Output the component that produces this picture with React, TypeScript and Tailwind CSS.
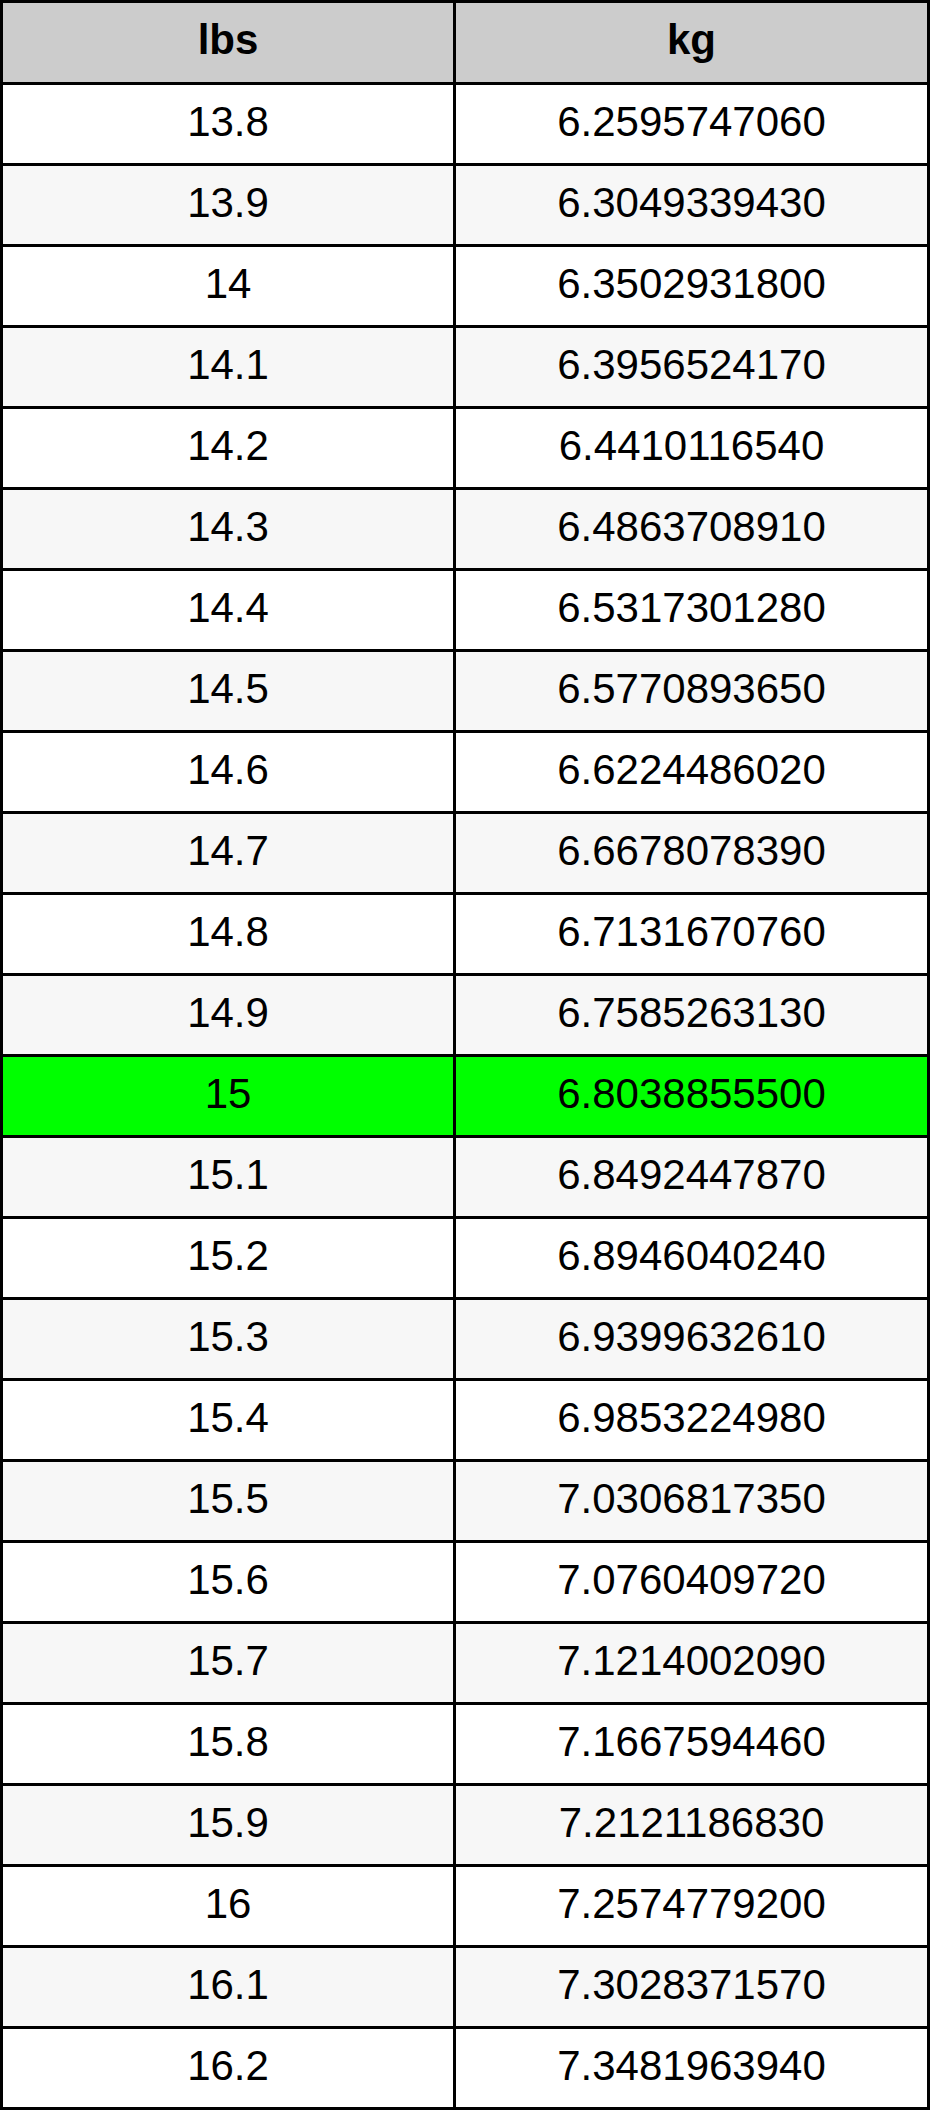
const ROWS: [string, string][] = [
  ['13.8', '6.2595747060'],
  ['13.9', '6.3049339430'],
  ['14', '6.3502931800'],
  ['14.1', '6.3956524170'],
  ['14.2', '6.4410116540'],
  ['14.3', '6.4863708910'],
  ['14.4', '6.5317301280'],
  ['14.5', '6.5770893650'],
  ['14.6', '6.6224486020'],
  ['14.7', '6.6678078390'],
  ['14.8', '6.7131670760'],
  ['14.9', '6.7585263130'],
  ['15', '6.8038855500'],
  ['15.1', '6.8492447870'],
  ['15.2', '6.8946040240'],
  ['15.3', '6.9399632610'],
  ['15.4', '6.9853224980'],
  ['15.5', '7.0306817350'],
  ['15.6', '7.0760409720'],
  ['15.7', '7.1214002090'],
  ['15.8', '7.1667594460'],
  ['15.9', '7.2121186830'],
  ['16', '7.2574779200'],
  ['16.1', '7.3028371570'],
  ['16.2', '7.3481963940'],
];

const HIGHLIGHT = '15';

function rowBg(lbs: string, index: number): string {
  if (lbs === HIGHLIGHT) return 'bg-[#00ff00]';
  return index % 2 === 1 ? 'bg-[#f7f7f7]' : 'bg-white';
}

export default function App() {
  return (
    <div className="w-[930px] bg-white font-['Liberation_Sans',Arial,sans-serif] text-[42px] text-black">
      <div className="flex flex-col gap-[3px] border-[3px] border-black bg-black">
        {/* Header */}
        <div className="grid h-[79px] grid-cols-[450px_471px] gap-[3px]">
          <div className="flex items-center justify-center bg-[#cccccc] pb-[6px] font-bold">lbs</div>
          <div className="flex items-center justify-center bg-[#cccccc] pb-[6px] font-bold">kg</div>
        </div>
        {ROWS.map(([lbs, kg], i) => (
          <div key={lbs} className="grid h-[78px] grid-cols-[450px_471px] gap-[3px]">
            <div className={`flex items-center justify-center pb-[6px] ${rowBg(lbs, i)}`}>{lbs}</div>
            <div className={`flex items-center justify-center pb-[6px] ${rowBg(lbs, i)}`}>{kg}</div>
          </div>
        ))}
      </div>
    </div>
  );
}
